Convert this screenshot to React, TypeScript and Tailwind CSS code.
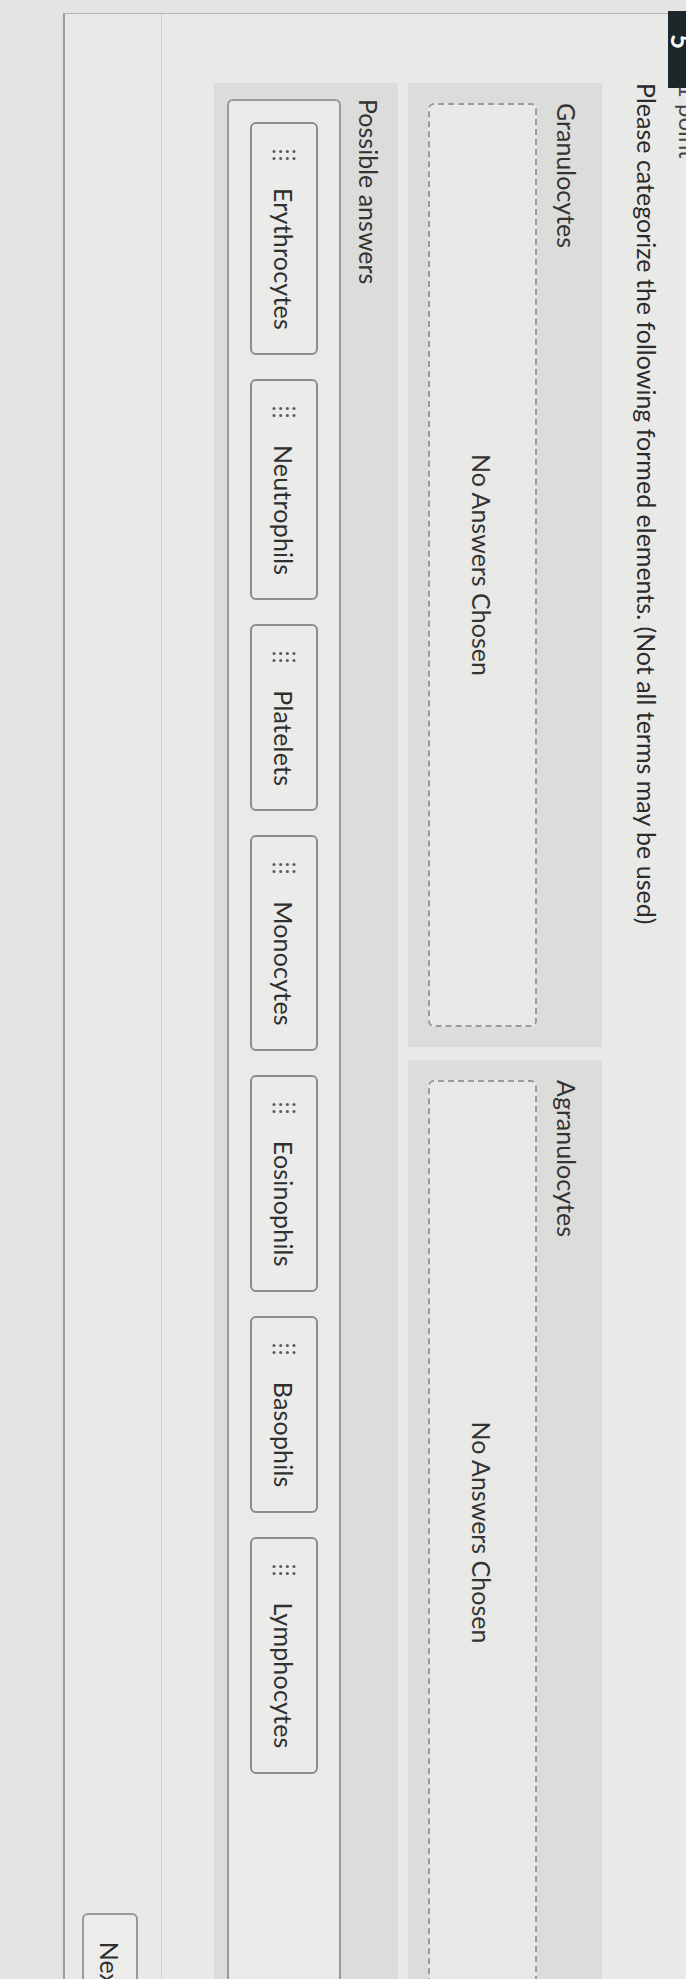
import React from 'react';

const answers = ['Erythrocytes', 'Neutrophils', 'Platelets', 'Monocytes', 'Eosinophils', 'Basophils', 'Lymphocytes'];

function Grip() {
  return (
    <svg width="10" height="24" viewBox="0 0 10 24" className="shrink-0 text-[#5a5a5a]" fill="currentColor">
      {[1.5, 8.5].map((cx) =>
        [2, 8.6, 15.3, 22].map((cy) => <circle key={`${cx}-${cy}`} cx={cx} cy={cy} r={1.5} />)
      )}
    </svg>
  );
}

function Chip({ label }: { label: string }) {
  return (
    <div className="flex h-[68px] shrink-0 items-center rounded-[6px] border-2 border-[#8c8c8c] bg-[#ebebe9] pl-[26px] pr-[23px]">
      <Grip />
      <span className="ml-[28px] text-[25px] leading-[30px] tracking-[0.2px] text-[#2f2f2f]">{label}</span>
    </div>
  );
}

function CategoryPanel({ title }: { title: string }) {
  return (
    <div className="bg-[#dcdcda] p-[20px]">
      <div className="text-[25px] leading-[30px] text-[#333]">{title}</div>
      <div className="mt-[15px] flex h-[109px] items-center justify-center rounded-[6px] border-2 border-dashed border-[#9b9b9b] bg-[#e8e8e6] text-[25px] leading-[30px] text-[#333]">
        No Answers Chosen
      </div>
    </div>
  );
}

export default function App() {
  return (
    <div className="h-[1979px] w-[686px] overflow-hidden bg-[#e4e4e2] font-['Lato','Liberation_Sans',sans-serif]">
      {/* the photo is turned a quarter clockwise: lay out as landscape, then rotate */}
      <div className="h-[686px] w-[1979px] origin-top-left translate-x-[686px] rotate-90 overflow-hidden bg-[#e4e4e2]">
        <div className="ml-[13px] w-[2083px] border-b-2 border-l border-b-[#9c9c9a] border-l-[#b5b5b3] bg-[#e9e9e7] pl-[69px]">
          {/* header: question number + points, mostly cut off at the top */}
          <div className="-ml-[72px] flex h-[18px] items-end">
            <div className="flex h-[18px] w-[77px] items-end overflow-hidden bg-[#1c272c] pl-[23px]">
              <span className="text-[26px] font-bold leading-[26px] text-white">5</span>
            </div>
            <span className="ml-[-4px] -mt-[14px] self-start text-[24px] leading-[24px] text-[#444]">1 point</span>
          </div>

          <h1 className="mt-[6px] text-[25px] leading-[30px] text-[#2b2b2b]">
            Please categorize the following formed elements. (Not all terms may be used)
          </h1>

          <div className="mt-[30px] grid grid-cols-[964px_945px] gap-[13px]">
            <CategoryPanel title="Granulocytes" />
            <CategoryPanel title="Agranulocytes" />
          </div>

          <div className="mt-[10px] w-[1941px] bg-[#dcdcda] px-[16px] pb-[13px] pt-[14px]">
            <div className="text-[25px] leading-[30px] text-[#333]">Possible answers</div>
            <div className="mt-[13px] flex gap-[24px] rounded-[6px] border-2 border-[#9a9a9a] bg-[#eaeae8] p-[21px]">
              {answers.map((a) => (
                <Chip key={a} label={a} />
              ))}
            </div>
          </div>

          <div className="-ml-[69px] mt-[52px] border-t border-[#d0d0ce] pb-[17px] pl-[69px] pt-[23px]">
            <div className="flex w-[1941px] justify-end">
              <button className="h-[56px] rounded-[6px] border-2 border-[#9a9a9a] bg-[#ececea] px-[27px] text-[25px] leading-[30px] text-[#2f2f2f]">
                Next
              </button>
            </div>
          </div>
        </div>
      </div>
    </div>
  );
}
